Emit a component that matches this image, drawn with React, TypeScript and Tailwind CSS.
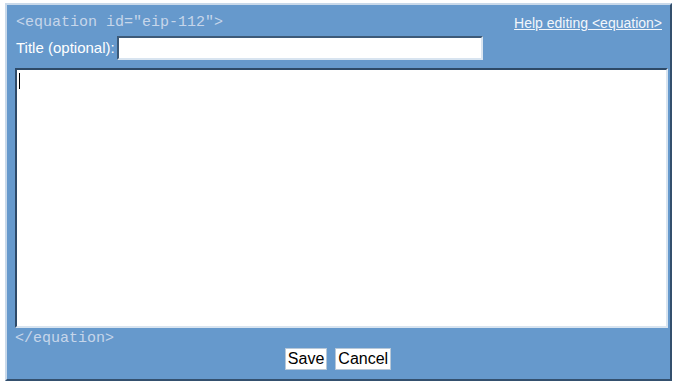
import React from 'react'

const mono = { fontFamily: '"Liberation Mono", "Courier New", monospace' }
const sans = { fontFamily: '"Liberation Sans", Arial, sans-serif' }

export default function App() {
  return (
    <div className="w-[678px] h-[386px] bg-white overflow-hidden" style={sans}>
      <div className="ml-[5px] mt-[3px] w-[667px] h-[378px] bg-[#6699cc] border-2 border-t-[#c9d9ea] border-l-[#c9d9ea] border-r-[#34506e] border-b-[#34506e] flex flex-col">
        <div className="flex items-center justify-between h-[18px] mt-[9px] pl-[9px] pr-[8px]">
          <span className="text-[15px] leading-[18px] text-[#c6d6ea]" style={mono}>
            &lt;equation id="eip-112"&gt;
          </span>
          <a href="#" className="text-[14px] leading-[16px] text-[#f2f6fb] underline">
            Help editing &lt;equation&gt;
          </a>
        </div>
        <div className="flex items-center h-[24px] mt-[4px] pl-[9px] gap-[2px]">
          <label className="text-[15px] leading-[18px] text-white">Title (optional):</label>
          <input
            type="text"
            className="w-[366px] h-[24px] bg-white border-2 border-t-[#3d5a78] border-l-[#3d5a78] border-r-[#d8e4f0] border-b-[#d8e4f0] outline-none"
          />
        </div>
        <div className="pl-[8px] mt-[8px]">
          <div className="w-[653px] h-[260px] bg-white border-2 border-t-[#2e4a68] border-l-[#2e4a68] border-r-[#d8e4f0] border-b-[#d8e4f0] relative">
            <div className="absolute left-[2px] top-[3px] w-px h-[16px] bg-black" />
          </div>
        </div>
        <div className="pl-[8px] h-[18px] mt-[2px] text-[15px] leading-[18px] text-[#c6d6ea]" style={mono}>
          &lt;/equation&gt;
        </div>
        <div className="flex justify-center gap-[8px] pr-[1px]">
          <button className="h-[22px] px-[2px] bg-white border border-[#b8c8d8] text-[16px] leading-[18px] text-black">
            Save
          </button>
          <button className="h-[22px] px-[2px] bg-white border border-[#b8c8d8] text-[16px] leading-[18px] text-black">
            Cancel
          </button>
        </div>
      </div>
    </div>
  )
}
